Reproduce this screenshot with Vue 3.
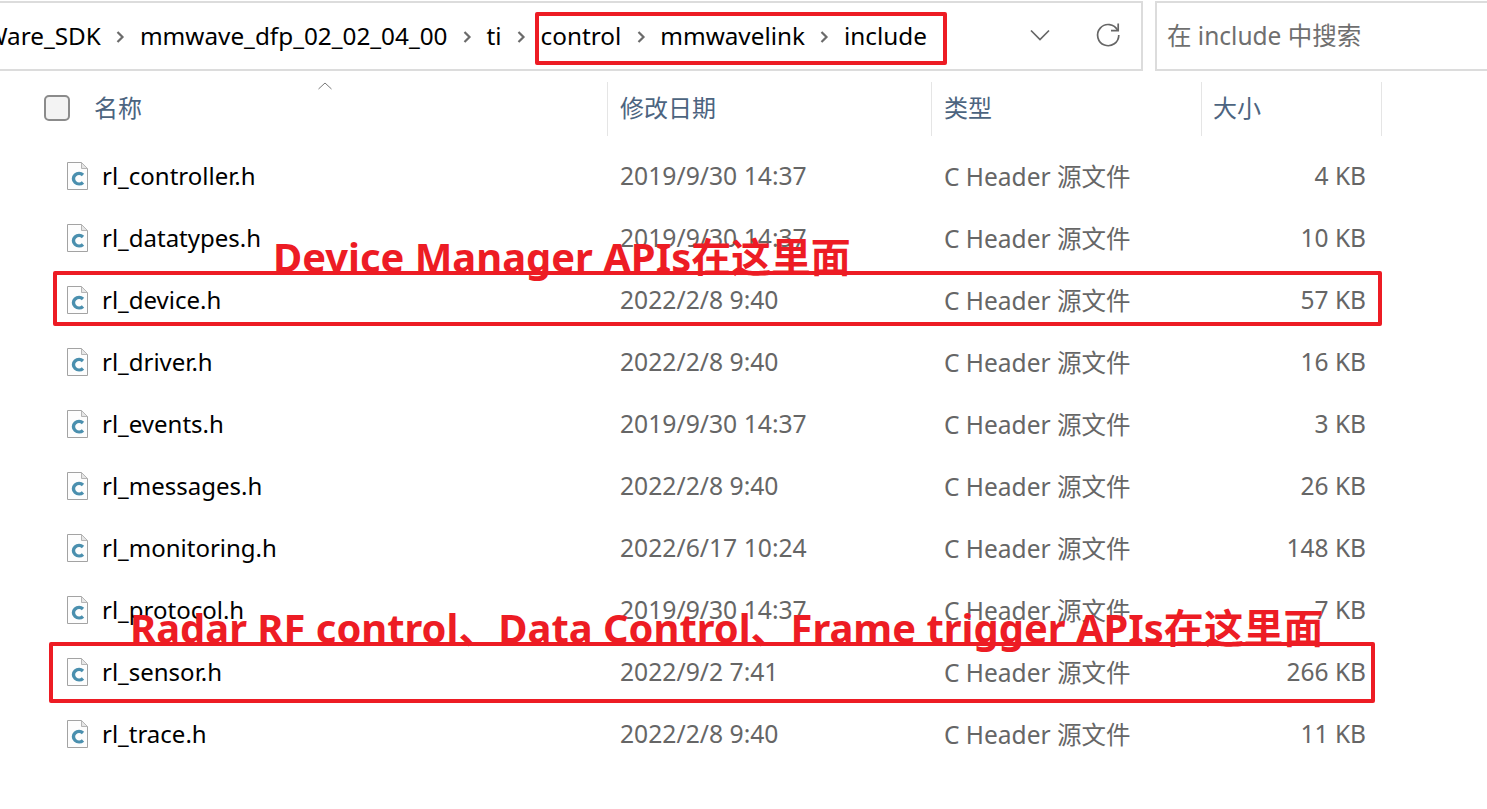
<script setup>
const crumbs = ['Ware_SDK', 'mmwave_dfp_02_02_04_00', 'ti', 'control', 'mmwavelink', 'include']
const files = [
  ['rl_controller.h', '2019/9/30 14:37', '4 KB'],
  ['rl_datatypes.h', '2019/9/30 14:37', '10 KB'],
  ['rl_device.h', '2022/2/8 9:40', '57 KB'],
  ['rl_driver.h', '2022/2/8 9:40', '16 KB'],
  ['rl_events.h', '2019/9/30 14:37', '3 KB'],
  ['rl_messages.h', '2022/2/8 9:40', '26 KB'],
  ['rl_monitoring.h', '2022/6/17 10:24', '148 KB'],
  ['rl_protocol.h', '2019/9/30 14:37', '7 KB'],
  ['rl_sensor.h', '2022/9/2 7:41', '266 KB'],
  ['rl_trace.h', '2022/2/8 9:40', '11 KB'],
]
</script>

<template>
  <div class="page">
    <header class="toolbar">
      <div class="address">
        <div class="crumbs">
          <template v-for="(c, i) in crumbs" :key="c">
            <span class="crumb">{{ c }}</span>
            <svg v-if="i < crumbs.length - 1" class="sep" viewBox="0 0 10 14" width="10" height="14">
              <path d="M2.5 2 L7.5 7 L2.5 12" fill="none" stroke="#6b6b6b" stroke-width="2.2" />
            </svg>
          </template>
        </div>
        <svg class="chevron" viewBox="0 0 22 14" width="22" height="14">
          <path d="M2 2.5 L11 11.5 L20 2.5" fill="none" stroke="#666" stroke-width="1.7" />
        </svg>
        <svg class="refresh" viewBox="0 0 26 26" width="26" height="26">
          <path d="M22.6 8.2 A10.6 10.6 0 1 0 23.8 13" fill="none" stroke="#666" stroke-width="1.7" />
          <path d="M23.2 1.5 V8.7 H16" fill="none" stroke="#666" stroke-width="1.7" />
        </svg>
      </div>
      <div class="search">在 include 中搜索</div>
    </header>

    <section class="list">
      <div class="head">
        <div class="cell name-head">
          <span class="check"></span>
          <span>名称</span>
          <svg class="sort" viewBox="0 0 14 8" width="14" height="8">
            <path d="M0.5 7 L7 1 L13.5 7" fill="none" stroke="#777" stroke-width="1" />
          </svg>
        </div>
        <div class="cell date-col">修改日期</div>
        <div class="cell type-col">类型</div>
        <div class="cell size-col">大小</div>
      </div>

      <div v-for="f in files" :key="f[0]" class="row">
        <div class="file">
          <svg class="ficon" viewBox="0 0 21 28" width="21" height="28">
            <path d="M0.5 0.5 H14.5 L20.5 6.5 V27.5 H0.5 Z" fill="#fdfdfd" stroke="#a3a3a3" />
            <path d="M14.5 0.5 V6.5 H20.5 Z" fill="#e6e6e6" stroke="#b5b5b5" />
            <path d="M16 13 A5.6 5.2 0 1 0 16 20.4" fill="none" stroke="#4a8fae" stroke-width="3.4" />
          </svg>
          <span>{{ f[0] }}</span>
        </div>
        <div class="date">{{ f[1] }}</div>
        <div class="type">C Header 源文件</div>
        <div class="size">{{ f[2] }}</div>
      </div>
    </section>

    <div class="box box-path"></div>
    <div class="box box-device"></div>
    <div class="box box-sensor"></div>
    <div class="note note-device">Device Manager APIs在这里面</div>
    <div class="note note-sensor">Radar RF control、Data Control、Frame trigger APIs在这里面</div>
  </div>
</template>

<style>
html, body { margin: 0; background: #fff; }
</style>

<style scoped>
.page {
  position: relative;
  width: 1487px;
  height: 809px;
  overflow: hidden;
  background: #fff;
  font-family: "Noto Sans", "Noto Sans CJK SC", sans-serif;
  font-size: 24.5px;
  color: #000;
}
.toolbar {
  display: flex;
  gap: 12px;
  height: 70px;
  padding-top: 1px;
}
.address {
  flex: 0 0 1143px;
  box-sizing: border-box;
  display: flex;
  align-items: center;
  border: 2px solid #dcdcdc;
  border-left: 0;
  overflow: hidden;
}
.crumbs {
  display: flex;
  align-items: center;
  margin: -1px 0 0 -15px;
  flex: 1;
  white-space: nowrap;
  font-size: 24.3px;
}
.sep { margin: 2px 14.5px 0; flex: none; }
.chevron { margin-right: 44px; margin-top: -2px; flex: none; }
.refresh { margin-right: 20px; margin-top: -2px; flex: none; }
.search {
  flex: 1;
  box-sizing: border-box;
  display: flex;
  align-items: center;
  padding: 0 0 3px 10px;
  border: 2px solid #dcdcdc;
  border-right: 0;
  color: #6f6f6f;
}
.head {
  display: grid;
  grid-template-columns: 608px 324px 270px 180px;
  height: 54px;
  margin-top: 11px;
  color: #4c6480;
  font-size: 24px;
}
.cell {
  box-sizing: border-box;
  display: flex;
  align-items: center;
  padding: 0 0 5px 12px;
  border-right: 1px solid #e5e5e5;
}
.size-col { padding-left: 11px; }
.name-head {
  position: relative;
  padding-left: 44px;
  gap: 24px;
}
.check {
  width: 26px;
  height: 26px;
  box-sizing: border-box;
  border: 2px solid #8b8b8b;
  border-radius: 5px;
  background: #f3f3f3;
  margin-top: 3px;
}
.sort { position: absolute; left: 318px; top: 0; }
.head + .row { margin-top: 8px; }
.row {
  display: grid;
  grid-template-columns: 608px 324px 270px 164px;
  height: 62px;
  align-items: center;
  color: #666;
}
.file {
  display: flex;
  align-items: center;
  gap: 14px;
  padding-left: 67px;
  color: #000;
  font-size: 24px;
}
.ficon { flex: none; margin-top: 2px; }
.date { padding-left: 12px; font-size: 24.7px; }
.type { padding-left: 12px; }
.size { text-align: right; }
.box {
  position: absolute;
  box-sizing: border-box;
  border: 4px solid #ed1c24;
  border-radius: 2px;
}
.box-path { left: 535px; top: 12px; width: 412px; height: 53px; }
.box-device { left: 53px; top: 271px; width: 1329px; height: 55px; }
.box-sensor { left: 49px; top: 642px; width: 1326px; height: 61px; }
.note {
  position: absolute;
  color: #ed1c24;
  font-weight: 700;
  font-size: 39.9px;
  line-height: 50px;
  white-space: nowrap;
}
.note-device { left: 273px; top: 232px; }
.note-sensor { left: 130px; top: 603px; }
</style>
